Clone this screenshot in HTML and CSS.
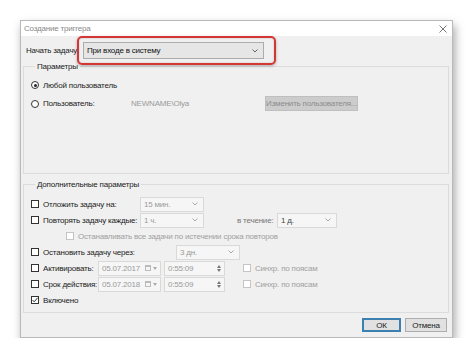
FILE: index.html
```html
<!DOCTYPE html>
<html lang="ru">
<head>
  <meta charset="UTF-8">
  <title>Создание триггера</title>
  <link rel="stylesheet" href="styles.css">
</head>
<body>

<div class="dialog">
  <div class="titlebar">
    <span class="title">Создание триггера</span>
    <svg class="close" width="8" height="8" viewBox="0 0 8 8"><path d="M0.5 0.5 L7.5 7.5 M7.5 0.5 L0.5 7.5" stroke="#777" stroke-width="1"/></svg>
  </div>

  <div class="content">
    <!-- начать задачу -->
    <div class="start-row">
      <span class="start-label">Начать задачу:</span>
      <div class="combo main-combo">
        <span>При входе в систему</span>
        <svg class="chev" width="6" height="4" viewBox="0 0 6 4"><path d="M0.5 0.5 L3 3 L5.5 0.5" fill="none" stroke="#666"/></svg>
      </div>
    </div>

    <!-- параметры -->
    <div class="group params">
      <div class="group-title">Параметры</div>
      <div class="radio-row">
        <span class="radio checked"></span>
        <span>Любой пользователь</span>
      </div>
      <div class="radio-row">
        <span class="radio"></span>
        <span class="user-label">Пользователь:</span>
        <span class="user-name">NEWNAME\Olya</span>
        <button class="btn change-btn">Изменить пользователя...</button>
      </div>
    </div>

    <!-- дополнительные параметры -->
    <div class="group extra">
      <div class="group-title">Дополнительные параметры</div>

      <div class="row">
        <span class="check"></span>
        <span class="lbl w-delay">Отложить задачу на:</span>
        <div class="combo off w-short"><span>15 мин.</span><svg class="chev" width="6" height="4" viewBox="0 0 6 4"><path d="M0.5 0.5 L3 3 L5.5 0.5" fill="none" stroke="#aaa"/></svg></div>
      </div>

      <div class="row">
        <span class="check"></span>
        <span class="lbl w-delay">Повторять задачу каждые:</span>
        <div class="combo off w-short"><span>1 ч.</span><svg class="chev" width="6" height="4" viewBox="0 0 6 4"><path d="M0.5 0.5 L3 3 L5.5 0.5" fill="none" stroke="#aaa"/></svg></div>
        <span class="during">в течение:</span>
        <div class="combo off w-day"><span class="dark">1 д.</span><svg class="chev" width="6" height="4" viewBox="0 0 6 4"><path d="M0.5 0.5 L3 3 L5.5 0.5" fill="none" stroke="#aaa"/></svg></div>
      </div>

      <div class="row sub-row">
        <span class="check off"></span>
        <span class="muted">Останавливать все задачи по истечении срока повторов</span>
      </div>

      <div class="row">
        <span class="check"></span>
        <span class="lbl w-stop">Остановить задачу через:</span>
        <div class="combo off w-short"><span>3 дн.</span><svg class="chev" width="6" height="4" viewBox="0 0 6 4"><path d="M0.5 0.5 L3 3 L5.5 0.5" fill="none" stroke="#aaa"/></svg></div>
      </div>

      <div class="row">
        <span class="check"></span>
        <span class="lbl w-date">Активировать:</span>
        <div class="combo off date"><span>05.07.2017</span><span class="cal"></span><svg class="tri" width="4" height="3" viewBox="0 0 4 3"><path d="M0 0 L4 0 L2 3 Z" fill="#aaa"/></svg></div>
        <div class="combo off time"><span>0:55:09</span><span class="spin"><svg width="4" height="3" viewBox="0 0 4 3"><path d="M0 3 L4 3 L2 0 Z" fill="#777"/></svg><svg width="4" height="3" viewBox="0 0 4 3"><path d="M0 0 L4 0 L2 3 Z" fill="#777"/></svg></span></div>
        <span class="check off sync"></span>
        <span class="muted">Синхр. по поясам</span>
      </div>

      <div class="row">
        <span class="check"></span>
        <span class="lbl w-date">Срок действия:</span>
        <div class="combo off date"><span>05.07.2018</span><span class="cal"></span><svg class="tri" width="4" height="3" viewBox="0 0 4 3"><path d="M0 0 L4 0 L2 3 Z" fill="#aaa"/></svg></div>
        <div class="combo off time"><span>0:55:09</span><span class="spin"><svg width="4" height="3" viewBox="0 0 4 3"><path d="M0 3 L4 3 L2 0 Z" fill="#777"/></svg><svg width="4" height="3" viewBox="0 0 4 3"><path d="M0 0 L4 0 L2 3 Z" fill="#777"/></svg></span></div>
        <span class="check off sync"></span>
        <span class="muted">Синхр. по поясам</span>
      </div>

      <div class="row">
        <span class="check checked"><svg width="8" height="8" viewBox="0 0 8 8"><path d="M1.5 4 L3.2 5.8 L6.6 1.8" fill="none" stroke="#333" stroke-width="1"/></svg></span>
        <span class="lbl">Включено</span>
      </div>
    </div>

    <div class="footer">
      <button class="btn ok-btn">ОК</button>
      <button class="btn cancel-btn">Отмена</button>
    </div>
  </div>
</div>

</body>
</html>
```

FILE: styles.css
```css
body {
  margin: 0;
  background: #fff;
  font-family: "Liberation Sans", Arial, sans-serif;
  font-size: 8px;
  letter-spacing: -0.2px;
  color: #222;
  white-space: nowrap;
}
.dialog {
  margin: 20px 0 0 20px;
  width: 433px;
  height: 318px;
  box-sizing: border-box;
  background: #f0f0f0;
  border: 1px solid #b9b9b9;
  box-shadow: 2px 5px 9px rgba(0, 0, 0, 0.35);
}
.titlebar {
  height: 15px;
  background: #fff;
  display: flex;
  align-items: center;
  justify-content: space-between;
  padding: 0 5px 0 3px;
}
.title {
  color: #8a8a8a;
}
.close {
  margin-top: 1px;
}
.content {
  padding: 0 4px 0 2px;
}

/* начать задачу */
.start-row {
  display: flex;
  align-items: center;
  margin-top: 6px;
  padding-left: 3px;
}
.start-label {
  width: 57px;
  flex-shrink: 0;
}
.combo {
  display: flex;
  align-items: center;
  justify-content: space-between;
  flex-shrink: 0;
  box-sizing: border-box;
  height: 15px;
  padding: 0 5px 0 3px;
  border: 1px solid #d9d9d9;
  background: #f6f6f6;
  color: #9a9a9a;
}
.main-combo {
  position: relative;
  width: 181px;
  height: 17px;
  background: #e6e6e6;
  border-color: #acacac;
  color: #111;
}
.main-combo::before {
  content: "";
  position: absolute;
  left: -7px;
  top: -7px;
  right: -13px;
  bottom: -7px;
  border: 2px solid #d43634;
  border-radius: 5px;
  box-shadow: 0 1px 3px rgba(0, 0, 0, 0.3), inset 0 0 2px rgba(0, 0, 0, 0.2);
}

/* группы */
.group {
  box-sizing: border-box;
  border: 1px solid #dcdcdc;
  width: 426px;
}
.group-title {
  margin: -6px 0 0 4px;
  line-height: 12px;
  padding: 0 2px;
  width: fit-content;
  background: #f0f0f0;
}
.params {
  margin-top: 7px;
  height: 108px;
  padding: 0 7px;
}
.extra {
  margin-top: 10px;
  height: 129px;
  padding: 0 7px;
}
.radio-row {
  display: flex;
  align-items: center;
  gap: 4px;
  height: 14px;
}
.params .group-title + .radio-row {
  margin-top: 5px;
}
.radio-row + .radio-row {
  margin-top: 4px;
  height: 15px;
}
.radio {
  width: 8px;
  height: 8px;
  flex-shrink: 0;
  box-sizing: border-box;
  border: 1px solid #333;
  border-radius: 50%;
  background: #fff;
  position: relative;
}
.radio.checked::after {
  content: "";
  position: absolute;
  left: 1.5px;
  top: 1.5px;
  width: 3px;
  height: 3px;
  border-radius: 50%;
  background: #222;
}
.user-label {
  width: 84px;
  flex-shrink: 0;
}
.user-name {
  color: #9a9a9a;
  width: 130px;
  flex-shrink: 0;
}
.btn {
  font-family: inherit;
  font-size: 8px;
  letter-spacing: -0.2px;
  height: 14px;
  padding: 0;
  flex-shrink: 0;
  border: 1px solid #adadad;
  background: #e1e1e1;
  color: #222;
}
.change-btn {
  width: 93px;
  height: 15px;
  background: #cccccc;
  border-color: #bfbfbf;
  color: #8c8c8c;
}

/* строки доп. параметров */
.row {
  display: flex;
  align-items: center;
  height: 16px;
}
.extra .group-title + .row {
  margin-top: 5px;
}
.check {
  width: 8px;
  height: 8px;
  flex-shrink: 0;
  box-sizing: border-box;
  border: 1px solid #333;
  background: #fff;
  margin-right: 4px;
  display: flex;
}
.check.off {
  border-color: #c4c4c4;
}
.check svg {
  margin: -1px;
}
.sub-row {
  padding-left: 35px;
}
.muted {
  color: #a0a0a0;
}
.lbl {
  flex-shrink: 0;
}
.lbl.w-delay {
  width: 97px;
}
.lbl.w-stop {
  width: 133px;
}
.lbl.w-date {
  width: 55px;
}
.w-short {
  width: 64px;
}
.during {
  margin-left: 33px;
  width: 40px;
  flex-shrink: 0;
  color: #777;
}
.w-day {
  width: 60px;
}
.dark {
  color: #444;
}
.date {
  width: 63px;
  padding-right: 3px;
}
.date span:first-child {
  flex: 1;
}
.cal {
  width: 6px;
  height: 6px;
  border: 1px solid #bbb;
  border-top-width: 2px;
  box-sizing: border-box;
  margin-right: 2px;
}
.time {
  width: 61px;
  margin-left: 3px;
  padding-right: 3px;
}
.spin {
  display: flex;
  flex-direction: column;
  gap: 1px;
}
.spin svg {
  display: block;
}
.sync {
  margin-left: 18px;
}

/* кнопки */
.footer {
  display: flex;
  justify-content: flex-end;
  gap: 4px;
  margin-top: 5px;
  padding-right: 1px;
}
.ok-btn {
  width: 39px;
  border: 1px solid #3c7fb1;
  box-shadow: inset 0 0 0 1px #3c7fb1;
}
.cancel-btn {
  width: 42px;
}
```
